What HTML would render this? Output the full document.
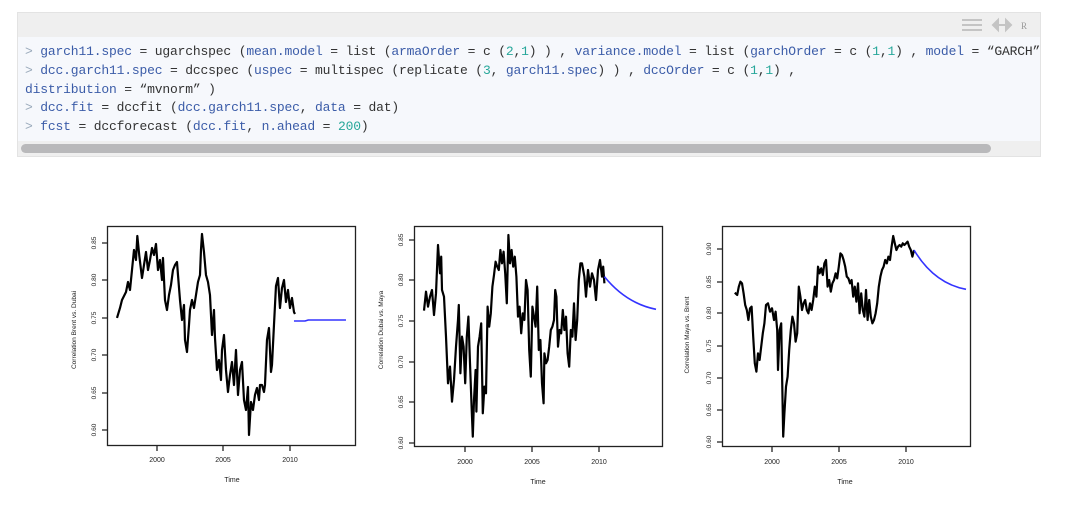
<!DOCTYPE html>
<html><head><meta charset="utf-8"><style>
body{margin:0;width:1080px;height:521px;background:#fff;position:relative;overflow:hidden;font-family:"Liberation Sans",sans-serif}
.box{position:absolute;left:17px;top:12px;width:1022px;height:143px;border:1px solid #e3e3e3;background:#f6f8fc;overflow:hidden}
.hdr{position:absolute;left:0;top:0;width:1022px;height:24px;background:#efefef}
.code{position:absolute;left:7px;top:30px;font-family:"Liberation Mono","Noto Sans CJK SC",monospace;font-size:13px;letter-spacing:-0.17px;line-height:18.8px;color:#333;white-space:pre}
.p{color:#9aaabb}.k{color:#3b5ca8}.n{color:#27a79a}
.track{position:absolute;left:0;top:128px;width:1022px;height:15px;background:#efefef}
.thumb{position:absolute;left:3px;top:3px;width:970px;height:9px;border-radius:5px;background:#b9b9bb}
svg{position:absolute;left:0;top:0}
</style></head><body>
<div class="box"><div class="hdr">
<svg width="1022" height="24"><g stroke="#c4c4c4" stroke-width="2" fill="none"><path d="M944 7h20M944 12h20M944 17h20"/></g><path d="M975 12h18M975 12l5-5v10zM993 12l-5-5v10z" stroke="#c4c4c4" stroke-width="2" fill="#c4c4c4"/><text x="1003" y="16" font-size="9" fill="#999" font-family="Liberation Serif">R</text></svg></div>
<div class="code"><span class="p">&gt;</span> <span class="k">garch11.spec</span> = ugarchspec (<span class="k">mean.model</span> = list (<span class="k">armaOrder</span> = c (<span class="n">2</span>,<span class="n">1</span>) ) , <span class="k">variance.model</span> = list (<span class="k">garchOrder</span> = c (<span class="n">1</span>,<span class="n">1</span>) , <span class="k">model</span> = “GARCH”
<span class="p">&gt;</span> <span class="k">dcc.garch11.spec</span> = dccspec (<span class="k">uspec</span> = multispec (replicate (<span class="n">3</span>, <span class="k">garch11.spec</span>) ) , <span class="k">dccOrder</span> = c (<span class="n">1</span>,<span class="n">1</span>) ,
<span class="k">distribution</span> = “mvnorm” )
<span class="p">&gt;</span> <span class="k">dcc.fit</span> = dccfit (<span class="k">dcc.garch11.spec</span>, <span class="k">data</span> = dat)
<span class="p">&gt;</span> <span class="k">fcst</span> = dccforecast (<span class="k">dcc.fit</span>, <span class="k">n.ahead</span> = <span class="n">200</span>)</div>
<div class="track"><div class="thumb"></div></div>
</div>
<svg width="1080" height="521" font-family="Liberation Sans" font-size="7" fill="#222">
<g fill="none" stroke="#222" stroke-width="1.3">
<rect x="107.5" y="226.5" width="248" height="219"/>
<rect x="414.5" y="226.5" width="248" height="220"/>
<rect x="722.5" y="226.5" width="248" height="220"/>
<path d="M102 243h5M102 280h5M102 318h5M102 355h5M102 393h5M102 430h5M157 446v5M223 446v5M290 446v5"/>
<path d="M409 240h5M409 280h5M409 321h5M409 362h5M409 402h5M409 443h5M465 447v5M532 447v5M599 447v5"/>
<path d="M717 249h5M717 282h5M717 313h5M717 346h5M717 378h5M717 410h5M717 442h5M772 447v5M839 447v5M906 447v5"/>
</g>
<g transform="translate(60,220) scale(0.3333)" fill="none" stroke-linejoin="round">
<polyline stroke="#000" stroke-width="2.2" vector-effect="non-scaling-stroke" points="171,294 180,264 186,240 198,216 204,186 210,210 216,150 222,90 228,120 232,48 238,108 246,174 252,135 258,96 264,150 270,120 276,84 282,105 288,72 294,150 300,120 306,180 309,114 315,240 321,270 327,225 333,195 339,150 345,135 351,126 354,165 360,240 366,300 372,255 375,360 381,396 387,315 390,270 396,240 402,264 408,225 414,186 420,165 423,90 426,42 432,96 438,165 444,186 450,225 456,345 462,270 465,354 471,450 477,420 483,480 486,390 492,345 498,450 504,516 510,465 516,426 522,495 528,390 534,525 540,450 546,426 552,540 558,570 564,501 567,645 573,546 579,570 585,525 591,504 597,540 600,495 606,495 612,516 615,495 621,360 627,324 633,456 636,435 642,315 648,198 654,174 660,264 666,204 672,180 678,246 684,210 690,264 696,234 702,276 705,282"/>
<polyline stroke="#3333ff" stroke-width="1.6" vector-effect="non-scaling-stroke" points="702,303 735,303 745,300 858,300"/>
</g>
<g transform="translate(370,220) scale(0.4,0.3333)" fill="none" stroke-linejoin="round">
<polyline stroke="#000" stroke-width="2.2" vector-effect="non-scaling-stroke" points="135,272 140,215 145,260 150,230 155,210 160,285 165,220 170,75 175,160 178,110 180,210 185,230 190,350 195,490 200,440 205,545 210,480 215,380 220,300 222,255 226,460 230,350 234,380 238,490 242,350 246,290 250,430 254,560 257,650 260,540 264,450 266,575 270,380 274,350 278,310 282,580 286,500 290,520 294,260 298,320 302,280 306,200 310,165 314,125 318,140 322,150 326,90 330,130 334,95 338,160 342,250 346,45 350,130 354,90 358,140 362,110 366,170 370,290 374,260 378,340 382,280 386,300 390,180 394,210 398,390 402,470 406,260 410,290 414,320 418,200 422,390 426,360 430,490 434,550 436,400 440,430 444,420 448,380 452,330 456,320 460,300 463,210 466,230 470,380 474,330 478,340 482,270 486,330 490,290 494,400 498,440 502,330 506,350 510,250 514,360 518,300 522,180 526,130 530,130 536,170 540,230 545,150 550,200 555,160 560,180 565,240 570,150 575,120 580,170 583,140 586,190"/>
<path stroke="#3333ff" stroke-width="1.6" vector-effect="non-scaling-stroke" d="M586,170 Q640,250 715,268"/>
<polyline stroke="#000" stroke-width="2.2" vector-effect="non-scaling-stroke" points="912,218 918,225 922,200 926,185 930,190 934,220 938,255 942,270 946,300 950,265 954,260 958,350 962,430 966,455 970,400 974,420 978,380 982,340 986,310 990,255 995,250 1000,275 1005,265 1010,300 1014,275 1018,330 1020,450 1024,330 1028,310 1030,450 1033,650 1036,580 1040,500 1044,470 1048,390 1052,330 1056,290 1060,310 1064,365 1068,340 1072,200 1076,230 1080,270 1084,250 1088,240 1092,270 1096,280 1100,250 1104,270 1108,240 1112,200 1116,230 1120,140 1124,160 1128,145 1132,165 1136,130 1140,120 1144,200 1148,180 1152,215 1156,190 1160,180 1164,160 1168,175 1172,140 1176,100 1180,105 1184,120 1188,140 1192,170 1196,175 1200,190 1204,180 1208,230 1212,200 1216,245 1220,190 1224,280 1228,220 1232,270 1236,290 1240,210 1244,300 1248,240 1252,290 1256,310 1260,300 1264,280 1268,250 1272,200 1276,170 1280,150 1284,140 1288,120 1292,130 1296,110 1300,120 1304,80 1308,48 1312,70 1316,90 1320,80 1324,75 1328,80 1332,70 1336,75 1340,70 1344,65 1348,80 1352,90 1356,110 1360,90"/>
<path stroke="#3333ff" stroke-width="1.6" vector-effect="non-scaling-stroke" d="M1360,90 Q1410,190 1490,208"/>
</g>
<g text-anchor="middle">
<text x="157" y="462">2000</text><text x="223" y="462">2005</text><text x="290" y="462">2010</text><text x="232" y="482">Time</text>
<text x="465" y="464">2000</text><text x="532" y="464">2005</text><text x="599" y="464">2010</text><text x="538" y="484">Time</text>
<text x="772" y="464">2000</text><text x="839" y="464">2005</text><text x="906" y="464">2010</text><text x="845" y="484">Time</text>
<g font-size="6.5">
<text transform="translate(96,243) rotate(-90)">0.85</text><text transform="translate(96,280) rotate(-90)">0.80</text><text transform="translate(96,318) rotate(-90)">0.75</text><text transform="translate(96,355) rotate(-90)">0.70</text><text transform="translate(96,393) rotate(-90)">0.65</text><text transform="translate(96,430) rotate(-90)">0.60</text>
<text transform="translate(403,240) rotate(-90)">0.85</text><text transform="translate(403,280) rotate(-90)">0.80</text><text transform="translate(403,321) rotate(-90)">0.75</text><text transform="translate(403,362) rotate(-90)">0.70</text><text transform="translate(403,402) rotate(-90)">0.65</text><text transform="translate(403,443) rotate(-90)">0.60</text>
<text transform="translate(711,249) rotate(-90)">0.90</text><text transform="translate(711,282) rotate(-90)">0.85</text><text transform="translate(711,313) rotate(-90)">0.80</text><text transform="translate(711,346) rotate(-90)">0.75</text><text transform="translate(711,378) rotate(-90)">0.70</text><text transform="translate(711,410) rotate(-90)">0.65</text><text transform="translate(711,442) rotate(-90)">0.60</text>
<text transform="translate(76,330) rotate(-90)">Correlation Brent vs. Dubai</text>
<text transform="translate(383,330) rotate(-90)">Correlation Dubai vs. Maya</text>
<text transform="translate(689,335) rotate(-90)">Correlation Maya vs. Brent</text>
</g></g>
</svg>
</body></html>
